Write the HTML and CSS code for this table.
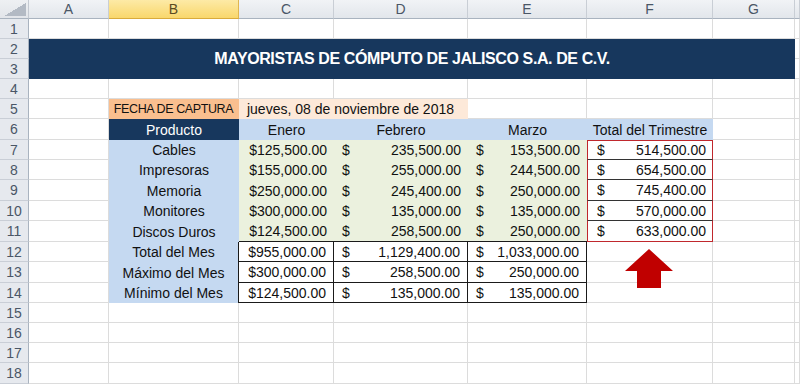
FILE: index.html
```html
<!DOCTYPE html>
<html lang="es">
<head>
<meta charset="utf-8">
<title>Mayoristas de Cómputo</title>
<link rel="stylesheet" href="styles.css">
</head>
<body>
<div class="sheet">
  <div class="corner"><span class="tri"></span></div>
  <div class="ch">A</div><div class="ch sel">B</div><div class="ch">C</div><div class="ch">D</div><div class="ch">E</div><div class="ch">F</div><div class="ch">G</div><div class="ch"></div>

  <div class="rh">1</div><div class="c"></div><div class="c"></div><div class="c"></div><div class="c"></div><div class="c"></div><div class="c"></div><div class="c"></div><div class="c"></div>

  <div class="rh">2</div><div class="title">MAYORISTAS DE CÓMPUTO DE JALISCO S.A. DE C.V.</div><div class="c"></div>
  <div class="rh">3</div><div class="c"></div>

  <div class="rh">4</div><div class="c"></div><div class="c"></div><div class="c"></div><div class="c"></div><div class="c"></div><div class="c"></div><div class="c"></div><div class="c"></div>

  <div class="rh">5</div><div class="c"></div><div class="fecha">FECHA DE CAPTURA</div><div class="fdate">jueves, 08 de noviembre de 2018</div><div class="c"></div><div class="c"></div><div class="c"></div><div class="c"></div>

  <div class="rh">6</div><div class="c"></div><div class="prod">Producto</div><div class="hb">Enero</div><div class="hb">Febrero</div><div class="hb">Marzo</div><div class="hb">Total del Trimestre</div><div class="c"></div><div class="c"></div>

  <div class="rh">7</div><div class="c"></div><div class="pb">Cables</div><div class="g cur">$125,500.00</div><div class="g acc"><span>$</span><span>235,500.00</span></div><div class="g acc"><span>$</span><span>153,500.00</span></div><div class="tot first"><span>$</span><span>514,500.00</span></div><div class="c"></div><div class="c"></div>

  <div class="rh">8</div><div class="c"></div><div class="pb">Impresoras</div><div class="g cur">$155,000.00</div><div class="g acc"><span>$</span><span>255,000.00</span></div><div class="g acc"><span>$</span><span>244,500.00</span></div><div class="tot"><span>$</span><span>654,500.00</span></div><div class="c"></div><div class="c"></div>

  <div class="rh">9</div><div class="c"></div><div class="pb">Memoria</div><div class="g cur">$250,000.00</div><div class="g acc"><span>$</span><span>245,400.00</span></div><div class="g acc"><span>$</span><span>250,000.00</span></div><div class="tot"><span>$</span><span>745,400.00</span></div><div class="c"></div><div class="c"></div>

  <div class="rh">10</div><div class="c"></div><div class="pb">Monitores</div><div class="g cur">$300,000.00</div><div class="g acc"><span>$</span><span>135,000.00</span></div><div class="g acc"><span>$</span><span>135,000.00</span></div><div class="tot"><span>$</span><span>570,000.00</span></div><div class="c"></div><div class="c"></div>

  <div class="rh">11</div><div class="c"></div><div class="pb">Discos Duros</div><div class="g cur bb">$124,500.00</div><div class="g acc bb"><span>$</span><span>258,500.00</span></div><div class="g acc bb"><span>$</span><span>250,000.00</span></div><div class="tot last"><span>$</span><span>633,000.00</span></div><div class="c"></div><div class="c"></div>

  <div class="rh">12</div><div class="c"></div><div class="pb bx">Total del Mes</div><div class="bd cur">$955,000.00</div><div class="bd acc"><span>$</span><span>1,129,400.00</span></div><div class="bd acc"><span>$</span><span>1,033,000.00</span></div><div class="c"></div><div class="c"></div><div class="c"></div>

  <div class="rh">13</div><div class="c"></div><div class="pb bx">Máximo del Mes</div><div class="bd cur">$300,000.00</div><div class="bd acc"><span>$</span><span>258,500.00</span></div><div class="bd acc"><span>$</span><span>250,000.00</span></div><div class="c"></div><div class="c"></div><div class="c"></div>

  <div class="rh">14</div><div class="c"></div><div class="pb bx">Mínimo del Mes</div><div class="bd cur">$124,500.00</div><div class="bd acc"><span>$</span><span>135,000.00</span></div><div class="bd acc"><span>$</span><span>135,000.00</span></div><div class="c"></div><div class="c"></div><div class="c"></div>

  <div class="rh">15</div><div class="c"></div><div class="c"></div><div class="c"></div><div class="c"></div><div class="c"></div><div class="c"></div><div class="c"></div><div class="c"></div>
  <div class="rh">16</div><div class="c"></div><div class="c"></div><div class="c"></div><div class="c"></div><div class="c"></div><div class="c"></div><div class="c"></div><div class="c"></div>
  <div class="rh">17</div><div class="c"></div><div class="c"></div><div class="c"></div><div class="c"></div><div class="c"></div><div class="c"></div><div class="c"></div><div class="c"></div>
  <div class="rh">18</div><div class="c"></div><div class="c"></div><div class="c"></div><div class="c"></div><div class="c"></div><div class="c"></div><div class="c"></div><div class="c"></div>

  <svg class="arrow" width="48" height="39" viewBox="0 0 48 39" aria-hidden="true">
    <polygon points="24,0 48,22 36,22 36,39 12,39 12,22 0,22" fill="#c00000"/>
  </svg>
</div>
</body>
</html>
```
FILE: styles.css
```css
* { box-sizing: border-box; }
html, body { margin: 0; padding: 0; background: #fff; overflow: hidden; }
body { font-family: "Liberation Sans", Arial, sans-serif; font-size: 14px; color: #111; }

.sheet {
  position: relative;
  display: grid;
  grid-template-columns: 29px 80px 130px 95px 134px 119px 126px 82px 5px;
  grid-template-rows: 19px 20px 20px 20px 20px 20px 21px 20px 20px 21px 20px 21px 20px 21px 20px 20px 20px 20px 21px;
  width: 800px;
  height: 384px;
}

.sheet > div {
  display: flex;
  align-items: center;
  white-space: nowrap;
  overflow: hidden;
  line-height: 18px;
}

.corner {
  background: linear-gradient(#eef0f3, #e2e5ea);
  border-right: 1px solid #c4c9d1;
  border-bottom: 1px solid #a9b3bf;
  position: relative;
}
.corner .tri {
  position: absolute;
  left: 4px; top: 3px; width: 22px; height: 13px;
  background: linear-gradient(to bottom right, transparent 50%, #b3bac4 50%);
}

.ch {
  justify-content: center;
  background: linear-gradient(#f1f3f6, #e2e6eb);
  border-right: 1px solid #c9ced5;
  border-bottom: 1px solid #a9b3bf;
  color: #4a5666;
  font-size: 14px;
}
.ch.sel {
  background: linear-gradient(#fdeaa6, #f9d76c);
  border-right: 1px solid #e0b64f;
  border-bottom: 1px solid #d9ab3c;
  color: #5a4a22;
}

.rh {
  justify-content: center;
  background: #e6e9ee;
  border-right: 1px solid #a9b3bf;
  border-bottom: 1px solid #c9ced6;
  color: #4a5666;
  font-size: 14px;
}

.c {
  border-right: 1px solid #dcdcdc;
  border-bottom: 1px solid #dcdcdc;
}

.title {
  grid-column: span 7;
  grid-row: span 2;
  justify-content: center;
  background: #17375d;
  color: #fff;
  font-weight: bold;
  font-size: 16px;
  letter-spacing: -0.4px;
}

.fecha {
  justify-content: center;
  background: #fabf8f;
  border-right: 1px solid #fabf8f;
  font-size: 12.5px;
  letter-spacing: -0.4px;
}
.fdate {
  grid-column: span 2;
  justify-content: center;
  background: #fde9d9;
  padding-right: 6px;
}

.prod {
  justify-content: center;
  background: #17375d;
  color: #fff;
}
.hb {
  justify-content: center;
  background: #c5d9f1;
}
.pb {
  justify-content: center;
  background: #c5d9f1;
}
.pb.bx { border-right: 1px solid #1a1a1a; }

.g { background: #ebf1de; }
.bb { border-bottom: 1px solid #1a1a1a; }

.cur { justify-content: flex-end; padding-right: 7px; }
.acc { justify-content: space-between; padding-left: 8px; padding-right: 7px; }

.bd {
  background: #fff;
  border-right: 1px solid #1a1a1a;
  border-bottom: 1px solid #1a1a1a;
}

.tot {
  justify-content: space-between;
  padding-left: 9px;
  padding-right: 6px;
  background: #fff;
  border-left: 1px solid #c0282d;
  border-right: 1px solid #c0282d;
  border-bottom: 1px solid #333;
}
.tot.first { border-top: 1px solid #c0282d; }
.tot.last { border-bottom: 1px solid #c0282d; }

.arrow {
  position: absolute;
  left: 625px;
  top: 249px;
}
```
